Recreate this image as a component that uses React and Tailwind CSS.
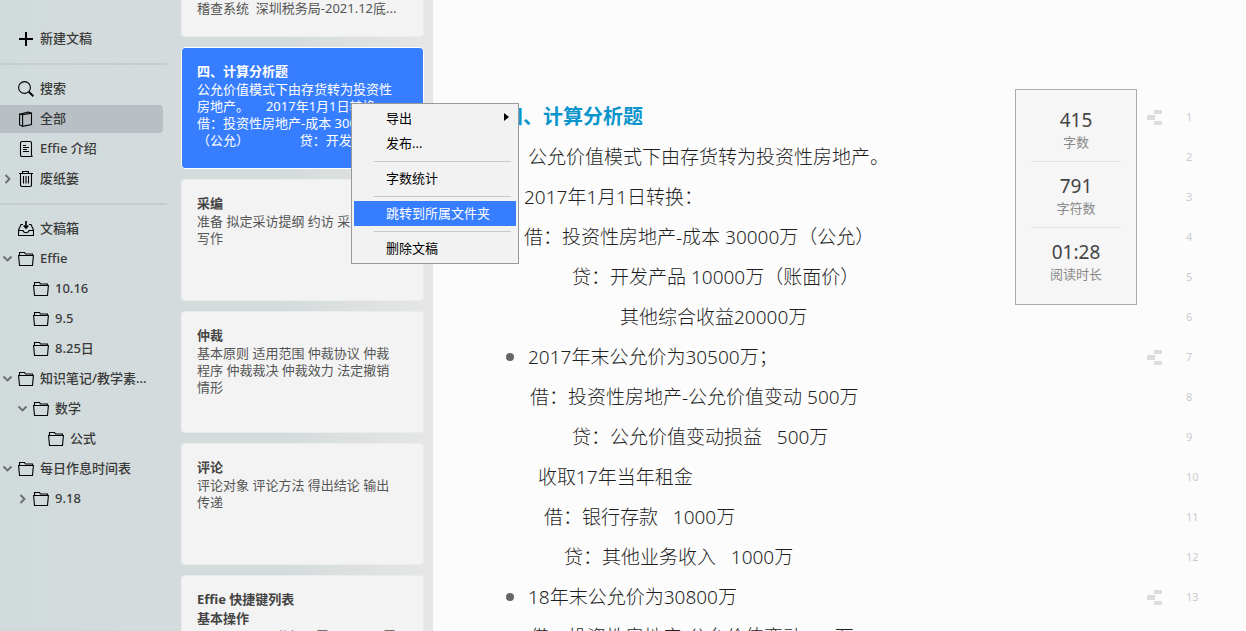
import React, { useState } from "react";

const treeItems = [
  { id: "inbox", label: "文稿箱", icon: "inbox", level: 0 },
  { id: "effie", label: "Effie", icon: "folder", level: 0, arrow: "down" },
  { id: "1016", label: "10.16", icon: "folder", level: 1 },
  { id: "95", label: "9.5", icon: "folder", level: 1 },
  { id: "825", label: "8.25日", icon: "folder", level: 1 },
  { id: "notes", label: "知识笔记/教学素...", icon: "folder", level: 0, arrow: "down" },
  { id: "math", label: "数学", icon: "folder", level: 1, arrow: "down" },
  { id: "formula", label: "公式", icon: "folder", level: 2 },
  { id: "daily", label: "每日作息时间表", icon: "folder", level: 0, arrow: "down" },
  { id: "918", label: "9.18", icon: "folder", level: 1, arrow: "right" },
];

const mainItems = [
  { id: "search", label: "搜索", icon: "search", level: 0 },
  { id: "all", label: "全部", icon: "book", level: 0 },
  { id: "intro", label: "Effie 介绍", icon: "doc", level: 0 },
  { id: "trash", label: "废纸篓", icon: "trash", level: 0, arrow: "right" },
];

const sheets = [
  {
    title: "四、计算分析题",
    body: "公允价值模式下由存货转为投资性\n房地产。     2017年1月1日转换：\n借：投资性房地产-成本 30000万\n（公允）               贷：开发产品",
    selected: true,
  },
  { title: "采编", body: "准备 拟定采访提纲 约访 采访\n写作" },
  {
    title: "仲裁",
    body: "基本原则 适用范围 仲裁协议 仲裁\n程序 仲裁裁决 仲裁效力 法定撤销\n情形",
  },
  { title: "评论", body: "评论对象 评论方法 得出结论 输出\n传递" },
  {
    title: "Effie 快捷键列表",
    subtitle: "基本操作",
    body: "Ctrl + ,            偏好设置                置",
  },
];

const lines = [
  { text: "四、计算分析题", heading: true, node: true },
  { text: "公允价值模式下由存货转为投资性房地产。", indent: "pl-1" },
  { text: "2017年1月1日转换：", indent: "pl-0" },
  { text: "借：投资性房地产-成本 30000万（公允）", indent: "pl-0" },
  { text: "贷：开发产品 10000万（账面价）", indent: "pl-12" },
  { text: "其他综合收益20000万", indent: "pl-24" },
  { text: "2017年末公允价为30500万；", indent: "pl-1", bullet: true, node: true },
  { text: "借：投资性房地产-公允价值变动 500万", indent: "pl-1.5" },
  { text: "贷：公允价值变动损益   500万", indent: "pl-12" },
  { text: "收取17年当年租金", indent: "pl-3.5" },
  { text: "借：银行存款   1000万", indent: "pl-5" },
  { text: "贷：其他业务收入   1000万", indent: "pl-10" },
  { text: "18年末公允价为30800万", indent: "pl-1", bullet: true, node: true },
  { text: "借：投资性房地产-公允价值变动300万", indent: "pl-1.5" },
];

const stats = [
  { value: "415", label: "字数" },
  { value: "791", label: "字符数" },
  { value: "01:28", label: "阅读时长" },
];

const levelPadding = ["pl-0", "pl-[15px]", "pl-[30px]"];

const iconPaths = {
  plus: <path d="M8 1v14M1 8h14" strokeWidth="2" />,
  search: (
    <>
      <circle cx="6.5" cy="6.5" r="5.9" />
      <path d="M10.8 10.8l4.6 4.4" strokeWidth="2" />
    </>
  ),
  book: (
    <>
      <path d="M4.6 3.6l8.9-1.5v11.4l-8.9 1.8z" />
      <path d="M4.6 15.3l-3-1.3V3.2l3 .4M1.6 3.2L9.8 1l3.7 1.1" />
    </>
  ),
  doc: (
    <>
      <path d="M14.6 15.5H4a1.5 1.5 0 0 1-1.5-1.5V2A1.5 1.5 0 0 1 4 .5h8A1.5 1.5 0 0 1 13.5 2v11.5c0 1.2.4 2 1.1 2" />
      <path d="M5 4.5h3M5 6.5h6M5 8.5h4M5 10.5h6" />
    </>
  ),
  trash: (
    <>
      <path d="M1 2.5h14M4.5 2.500V.5h6v2M2.500 2.500V14A1.500 1.500 0 0 0 4 15.500h8a1.500 1.500 0 0 0 1.500-1.500V2.500" />
      <path d="M5.500 5v7.500M8 5v7.500M10.500 5v7.500" />
    </>
  ),
  inbox: (
    <>
      <path d="M5 3.500H3L.5 9v5.500h15V9L13 3.500h-2" />
      <path d="M.5 9.500H5c.3 1.500 1.300 2.200 3 2.200s2.700-.7 3-2.200h4.500" />
      <path d="M8 0v6M5.700 4.500L8 7l2.300-2.500" strokeWidth="1.600" />
    </>
  ),
  folder: (
    <>
      <path d="M.6 4.500h14.800l-.9 10H1.500z" />
      <path d="M1.500 4.500v-3h5l1 1.500h7v1.500" />
    </>
  ),
};

function Icon({ name }) {
  return (
    <svg
      viewBox="0 0 16 16"
      className="mr-1.5 size-4 shrink-0 text-black"
      fill="none"
      stroke="currentColor"
      strokeWidth="1.1"
      aria-hidden="true"
    >
      {iconPaths[name]}
    </svg>
  );
}

function Arrow({ direction }) {
  return (
    <svg
      viewBox="0 0 16 16"
      className="mr-0.5 size-4 shrink-0 text-[#6b6f70]"
      fill="none"
      stroke="currentColor"
      strokeWidth="1.9"
      aria-hidden="true"
    >
      {direction === "down" && <path d="M3.5 5.500l4 4 4-4" />}
      {direction === "right" && <path d="M5.500 4l4 4-4 4" />}
    </svg>
  );
}

function NavRow({ item, active, onClick }) {
  return (
    <li className="py-px">
      <button
        type="button"
        onClick={onClick}
        className={`flex h-7 w-[163px] items-center rounded-r text-left ${
          levelPadding[item.level]
        } ${active ? "bg-[#b9c0c5]" : ""}`}
      >
        <Arrow direction={item.arrow} />
        <Icon name={item.icon} />
        <span className="whitespace-nowrap">{item.label}</span>
      </button>
    </li>
  );
}

function Sidebar() {
  const [current, setCurrent] = useState("all");

  const renderRows = (items) =>
    items.map((item) => (
      <NavRow
        key={item.id}
        item={item}
        active={current === item.id}
        onClick={() => setCurrent(item.id)}
      />
    ));

  return (
    <nav className="w-[170px] shrink-0 pt-6 text-[13px] font-medium text-[#3a3a3a]">
      <ul>
        <NavRow item={{ label: "新建文稿", icon: "plus", level: 0 }} />
      </ul>
      <hr className="my-[9px] mr-[3px] h-0.5 border-0 bg-[#c6cdce]" />
      <ul>{renderRows(mainItems)}</ul>
      <hr className="my-[9px] mr-[3px] h-0.5 border-0 bg-[#c6cdce]" />
      <ul>{renderRows(treeItems)}</ul>
    </nav>
  );
}

function SheetCard({ sheet }) {
  return (
    <article
      className={`h-[122px] shrink-0 overflow-hidden rounded border px-[15px] pt-[13px] ${
        sheet.selected
          ? "border-white bg-[#377dff] text-white"
          : "border-[#ebeded] bg-[#f3f3f3] text-[#555]"
      }`}
    >
      <h3 className={`font-bold leading-5 ${sheet.selected ? "" : "text-[#444]"}`}>
        {sheet.title}
      </h3>
      {sheet.subtitle && (
        <h4 className="mb-px font-bold leading-[18px] text-[#444]">{sheet.subtitle}</h4>
      )}
      <p className="whitespace-pre leading-[17px]">{sheet.body}</p>
    </article>
  );
}

function SheetList() {
  return (
    <section className="flex w-[263px] shrink-0 flex-col gap-2.5 overflow-hidden pl-[11px] pr-[9px] text-[13px]">
      <article className="h-[37px] shrink-0 rounded-b border border-t-0 border-[#ebeded] bg-[#f3f3f3] px-[15px] text-[#555]">
        <p className="whitespace-pre leading-[17px]">稽查系统  深圳税务局-2021.12底...</p>
      </article>
      {sheets.map((sheet) => (
        <SheetCard key={sheet.title} sheet={sheet} />
      ))}
    </section>
  );
}

function NodeIcon() {
  return (
    <svg viewBox="0 0 15 15" className="size-[15px]" fill="#dcdcdc" aria-hidden="true">
      <rect x="7" y="0" width="8" height="4" rx="0.5" />
      <rect x="0" y="5" width="8" height="5" rx="0.5" />
      <rect x="7" y="11" width="8" height="4" rx="0.5" />
    </svg>
  );
}

function EditorLine({ line, number }) {
  return (
    <li className="flex h-10 items-center">
      <div className="flex min-w-0 flex-1 items-center whitespace-pre">
        {line.heading ? (
          <h1 className="text-xl font-bold text-[#0a94cc]">{line.text}</h1>
        ) : (
          <>
            <span className="flex w-[21px] shrink-0 items-center pl-[3px]">
              {line.bullet && <span className="size-2 rounded-full bg-[#666]" />}
            </span>
            <p className={`text-[19px] font-light text-[#1f1f1f] ${line.indent}`}>{line.text}</p>
          </>
        )}
      </div>
      <span className="w-[39px] shrink-0">{line.node && <NodeIcon />}</span>
      <span className="w-[60px] shrink-0 text-[11px] text-[#c8ccd0]">{number}</span>
    </li>
  );
}

function StatsPanel() {
  return (
    <aside className="absolute right-[109px] top-[89px] w-[122px] border border-[#aaa] bg-[#f6f6f6] px-[15px] pb-[11px] pt-1.5 text-center">
      <dl className="divide-y divide-[#e2e2e2]">
        {stats.map((stat) => (
          <div key={stat.label} className="flex flex-col-reverse pb-[9px] pt-3">
            <dt className="text-[13px] leading-5 text-[#888]">{stat.label}</dt>
            <dd className="text-[19px] leading-6 text-[#444]">{stat.value}</dd>
          </div>
        ))}
      </dl>
    </aside>
  );
}

function MenuItem({ children, highlighted, submenu }) {
  return (
    <button
      type="button"
      role="menuitem"
      className={`flex h-[25px] w-full items-center justify-between pl-8 pr-[7px] text-left ${
        highlighted ? "bg-[#377dff] text-white" : "text-black"
      }`}
    >
      {children}
      {submenu && (
        <svg viewBox="0 0 5 8" className="mb-1 h-2 w-[5px]" fill="currentColor" aria-hidden="true">
          <path d="M0 0l5 4-5 4z" />
        </svg>
      )}
    </button>
  );
}

function MenuDivider() {
  return <hr className="mb-1 ml-5 mr-[5px] mt-[5px] h-px border-0 bg-[#c8c8c8]" />;
}

function ContextMenu() {
  return (
    <div
      role="menu"
      className="absolute left-[351px] top-[103px] z-10 w-[168px] border border-[#999] bg-[#f2f2f2] p-0.5 text-[13px]"
    >
      <MenuItem submenu>导出</MenuItem>
      <MenuItem>发布...</MenuItem>
      <MenuDivider />
      <MenuItem>字数统计</MenuItem>
      <MenuDivider />
      <MenuItem highlighted>跳转到所属文件夹</MenuItem>
      <MenuDivider />
      <MenuItem>删除文稿</MenuItem>
    </div>
  );
}

export default function App() {
  return (
    <div className="relative flex h-screen overflow-hidden font-['Noto_Sans','Noto_Sans_CJK_SC',sans-serif]">
      <div className="flex shrink-0 bg-linear-to-r from-[#d2dbdc] via-[#d4dbdc] via-65% to-[#e6e6e6]">
        <Sidebar />
        <SheetList />
      </div>
      <main className="relative min-w-0 flex-1 overflow-hidden bg-[#fcfcfc] pl-[70px] pt-[97px]">
        <ol>
          {lines.map((line, index) => (
            <EditorLine key={index} line={line} number={index + 1} />
          ))}
        </ol>
        <StatsPanel />
      </main>
      <ContextMenu />
    </div>
  );
}
